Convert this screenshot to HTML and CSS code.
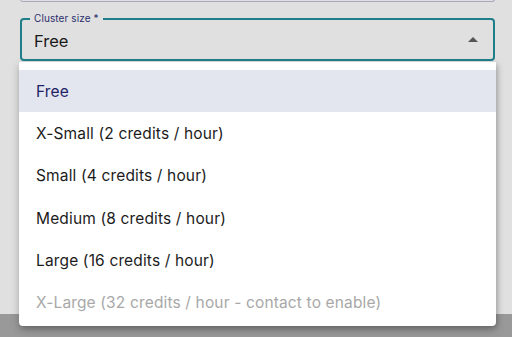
FILE: index.html
```html
<!DOCTYPE html>
<html lang="en">

<head>
  <meta charset="UTF-8">
  <meta name="viewport" content="width=device-width, initial-scale=1.0">
  <title>Cluster size</title>
  <link rel="stylesheet" href="styles.css">
</head>

<body>
  <div class="page">
    <div class="form">
      <div class="prev-field"></div>
      <div class="select">
        <span class="label">Cluster size *</span>
        <span class="value">Free</span>
        <span class="arrow"></span>
      </div>
    </div>
    <div class="footer"></div>
  </div>

  <ul class="menu">
    <li class="option selected">Free</li>
    <li class="option">X-Small (2 credits / hour)</li>
    <li class="option">Small (4 credits / hour)</li>
    <li class="option">Medium (8 credits / hour)</li>
    <li class="option">Large (16 credits / hour)</li>
    <li class="option disabled">X-Large (32 credits / hour - contact to enable)</li>
  </ul>
</body>

</html>
```

FILE: styles.css
```css
* {
  margin: 0;
  padding: 0;
  box-sizing: border-box;
  font-family: 'Inter', sans-serif;
}

body {
  width: 512px;
  height: 337px;
  overflow: hidden;
  background: #e0e0e0;
  position: relative;
}

.page {
  display: flex;
  flex-direction: column;
  height: 100%;
}

.form {
  flex: 1;
  padding: 0 17px 0 20px;
}

.prev-field {
  height: 3px;
  margin-top: -1px;
  border: 1px solid #a9a8bd;
  border-top: none;
  border-radius: 0 0 4px 4px;
}

.select {
  position: relative;
  margin-top: 16px;
  height: 43px;
  border: 2px solid #1e7f8a;
  border-radius: 4px;
  padding: 0 12px;
  display: flex;
  align-items: center;
}

.label {
  position: absolute;
  top: -8px;
  left: 8px;
  padding: 0 4px;
  background: #e0e0e0;
  font-size: 10px;
  letter-spacing: 0.1px;
  color: #2a2e6e;
}

.value {
  font-size: 16.5px;
  color: #1a1a1a;
  margin-top: 2px;
}

.arrow {
  margin-left: auto;
  margin-right: 3px;
  width: 0;
  height: 0;
  border-left: 5px solid transparent;
  border-right: 5px solid transparent;
  border-bottom: 5px solid #555;
}

.footer {
  height: 23px;
  background: #999;
}

.menu {
  position: absolute;
  top: 62px;
  left: 19px;
  width: 477px;
  height: 264px;
  list-style: none;
  background: #fff;
  border-radius: 0 0 4px 4px;
  padding-top: 8px;
  box-shadow: 0 4px 8px rgba(0, 0, 0, 0.25), 2px 2px 4px rgba(0, 0, 0, 0.12);
}

.option {
  height: 42.3px;
  display: flex;
  align-items: center;
  padding-left: 17px;
  font-size: 15.5px;
  letter-spacing: 0.15px;
  color: #1c1c1c;
}

.option.selected {
  background: #e3e6ee;
  color: #1f2366;
}

.option.disabled {
  color: #a8a8a8;
}
```
